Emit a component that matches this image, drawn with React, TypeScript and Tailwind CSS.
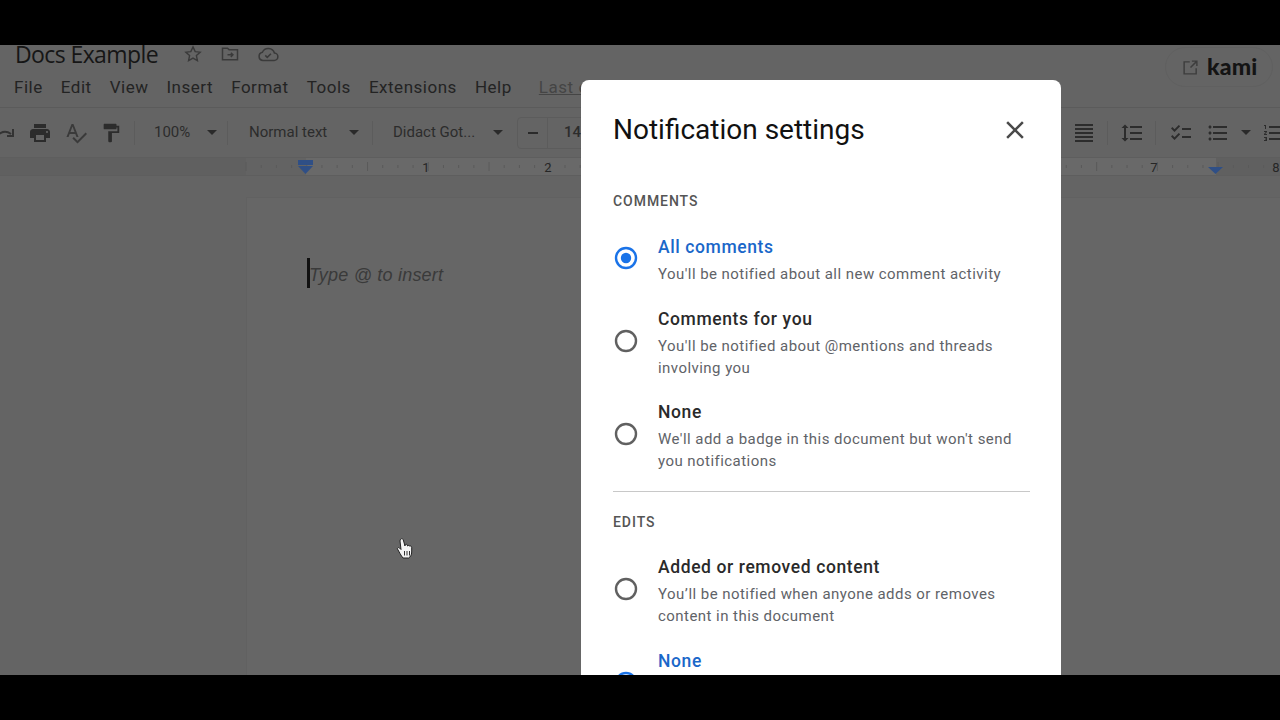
import React from "react";

const M = ({ d, size = 24, className = "" }: { d: string; size?: number; className?: string }) => (
  <svg width={size} height={size} viewBox="0 0 24 24" fill="currentColor" className={"shrink-0 " + className}><path d={d} /></svg>
);
const Caret = ({ className = "" }: { className?: string }) => (
  <svg width="10" height="5" viewBox="0 0 10 5" className={"shrink-0 " + className}><path d="M0 0h10L5 5z" fill="#2a2a2a" /></svg>
);
const Sep = ({ className = "" }: { className?: string }) => <div className={"w-px h-6 bg-[#5c5c5c] shrink-0 " + className} />;

const Radio = ({ on }: { on?: boolean }) => (
  <svg width="24" height="24" viewBox="0 0 24 24" className="shrink-0 -mt-[4px] ml-[0.5px]">
    <circle cx="12" cy="12" r="10" fill="none" stroke={on ? "#1a73e8" : "#606060"} strokeWidth="2.4" />
    {on && <circle cx="12" cy="12" r="5.2" fill="#1a73e8" />}
  </svg>
);

const Row = ({ title, lines, on, className = "" }: { title: string; lines: string[]; on?: boolean; className?: string }) => (
  <div className={"flex items-center gap-[20.5px] " + className}>
    <Radio on={on} />
    <div className="self-start">
      <div className={"text-[17.5px] leading-6 font-medium tracking-[0.6px] " + (on ? "text-[#1a67c9]" : "text-[#2a2a2a]")}>{title}</div>
      {lines.length > 0 && (
        <div className="mt-[3.5px] text-[15px] leading-[22px] tracking-[0.45px] text-[#5f6368] whitespace-pre-line">
          {lines.join("\n")}
        </div>
      )}
    </div>
  </div>
);

const ticks = Array.from({ length: 68 }, (_, i) => 246 + i * 15.19);

export default function App() {
  return (
    <div className="w-[1280px] h-[720px] bg-black py-[45px] font-['Roboto',sans-serif]">
      <div className="relative w-full h-[630px] overflow-hidden bg-[#646464] text-[#232323]">
        {/* title row */}
        <div className="h-[19px] flex items-center pl-[15px] text-[#161616]">
          <span className="text-[23px] leading-[22px] tracking-[-0.6px] font-['Open_Sans',sans-serif] -mt-[2px]">Docs Example</span>
          <svg width="20" height="20" viewBox="0 0 24 24" className="ml-[25px] -mt-[2px]" fill="none" stroke="#3a3a3a" strokeWidth="1.7"><path d="M12 3.500l2.600 5.600 6 .7-4.500 4.100 1.200 6-5.300-3-5.300 3 1.200-6-4.500-4.100 6-.7z" /></svg>
          <svg width="20" height="20" viewBox="0 0 24 24" className="ml-[17px] -mt-[2px]" fill="none" stroke="#3a3a3a" strokeWidth="1.8"><path d="M3 19V5h6l2 2h10v12z M9 13h6M13 10.500l2.500 2.500-2.500 2.500" /></svg>
          <svg width="22" height="22" viewBox="0 0 24 24" className="ml-[17px] -mt-[2px]" fill="none" stroke="#3a3a3a" strokeWidth="1.7"><path d="M6.500 19a4.500 4.500 0 0 1-.6-8.900A7 7 0 0 1 19 11a4 4 0 0 1-.5 8z M9 13.500l2.200 2.200 4-4" /></svg>
        </div>
        {/* menu row */}
        <div className="h-[44px] pt-1 flex items-center pl-[14px] gap-[18px] text-[17px] tracking-[0.52px] border-b border-[#5b5b5b] text-[#232323]">
          {["File", "Edit", "View", "Insert", "Format", "Tools", "Extensions", "Help"].map((m) => (
            <span key={m}>{m}</span>
          ))}
          <span className="ml-[9px] underline text-[#454545]">Last edit</span>
        </div>
        {/* toolbar */}
        <div className="h-[50px] flex items-center text-[15px] border-b border-[#5e5e5e] text-[#2c2c2c]">
          <svg width="16" height="12" viewBox="0 0 16 12" className="-ml-[1px] shrink-0" fill="none" stroke="#333" strokeWidth="2"><path d="M0 7c4-3 8-3 12 0M14 2v7H8" /></svg>
          <M size={24} className="ml-[13px]" d="M19 8H5c-1.66 0-3 1.34-3 3v6h4v4h12v-4h4v-6c0-1.66-1.34-3-3-3zm-3 11H8v-5h8v5zm3-7c-.55 0-1-.45-1-1s.45-1 1-1 1 .45 1 1-.45 1-1 1zm-1-9H6v4h12V3z" />
          <M size={24} className="ml-[12px] text-[#3a3a3a]" d="M12.450 16h2.090L9.430 3H7.570L2.460 16h2.090l1.120-3h5.640l1.140 3zm-6.020-5L8.500 5.480 10.570 11H6.430zm15.160.59l-8.090 8.090L9.830 16l-1.410 1.410 5.090 5.090L23 13l-1.410-1.410z" />
          <M size={22} className="ml-[12px]" d="M18 4V3c0-.55-.45-1-1-1H5c-.55 0-1 .45-1 1v4c0 .55.45 1 1 1h12c.55 0 1-.45 1-1V6h1v4H9v11c0 .55.45 1 1 1h2c.55 0 1-.45 1-1v-9h8V4h-3z" />
          <Sep className="ml-[12px]" />
          <span className="ml-[19px] w-[37px] shrink-0">100%</span>
          <Caret className="ml-[16px]" />
          <Sep className="ml-[10px]" />
          <span className="ml-[21px] w-[80px] shrink-0 whitespace-nowrap">Normal text</span>
          <Caret className="ml-[20px]" />
          <Sep className="ml-[13px]" />
          <span className="ml-[20px] w-[82px] shrink-0 whitespace-nowrap">Didact Got...</span>
          <Caret className="ml-[18px]" />
          <div className="ml-[14px] h-8 w-[90px] border border-[#5c5c5c] rounded flex items-center shrink-0">
            <div className="w-[30px] h-full border-r border-[#5c5c5c] flex items-center justify-center"><div className="w-[10px] h-[2px] bg-[#2a2a2a]" /></div>
            <span className="ml-[16px] font-medium">14</span>
          </div>
          <div className="ml-[465px] flex items-center shrink-0">
            <M size={24} d="M3 21h18v-2H3v2zm0-4h18v-2H3v2zm0-4h18v-2H3v2zm0-4h18V7H3v2zm0-6v2h18V3H3z" />
            <Sep className="ml-[11px]" />
            <M size={24} className="ml-[12px]" d="M6 7h2.500L5 3.500 1.500 7H4v10H1.500L5 20.500 8.500 17H6V7zm4-2v2h12V5H10zm0 14h12v-2H10v2zm0-6h12v-2H10v2z" />
            <Sep className="ml-[11px]" />
            <M size={24} className="ml-[13px]" d="M22 7h-9v2h9V7zm0 8h-9v2h9v-2zM5.540 11L2 7.460l1.410-1.410 2.120 2.120 4.240-4.240 1.410 1.410L5.540 11zm0 8L2 15.460l1.410-1.410 2.120 2.120 4.240-4.240 1.410 1.410L5.540 19z" />
            <M size={24} className="ml-[13px]" d="M4 10.500c-.83 0-1.500.67-1.500 1.500s.67 1.500 1.500 1.500 1.500-.67 1.500-1.500-.67-1.500-1.500-1.500zm0-6c-.83 0-1.500.67-1.500 1.500S3.170 7.500 4 7.500 5.500 6.830 5.500 6 4.830 4.500 4 4.500zm0 12c-.83 0-1.500.68-1.500 1.500s.68 1.500 1.500 1.500 1.500-.68 1.500-1.500-.67-1.500-1.500-1.500zM7 19h14v-2H7v2zm0-6h14v-2H7v2zm0-8v2h14V5H7z" />
            <Caret className="ml-[11px]" />
            <M size={24} className="ml-[11px]" d="M2 17h2v.5H3v1h1v.5H2v1h3v-4H2v1zm1-9h1V4H2v1h1v3zm-1 3h1.800L2 13.100v.9h3v-1H3.200L5 10.900V10H2v1zm5-6v2h14V5H7zm0 14h14v-2H7v2zm0-6h14v-2H7v2z" />
          </div>
        </div>
        {/* ruler */}
        <svg width="1280" height="18" viewBox="0 0 1280 18" className="block">
          <rect x="0" y="0" width="246" height="17" fill="#606060" />
          <rect x="246" y="0" width="60" height="17" fill="#636363" />
          <rect x="306" y="0" width="910" height="17" fill="#696969" />
          <rect x="1216" y="0" width="64" height="17" fill="#606060" />
          <rect x="0" y="17" width="1280" height="1" fill="#5e5e5e" />
          {ticks.map((x, i) => (
            <line key={i} x1={x} x2={x} y1={i % 4 === 0 ? 4 : 7} y2={i % 4 === 0 ? 13 : 10} stroke="#5a5a5a" strokeWidth="1" />
          ))}
          {[[426, "1"], [548, "2"], [1154, "7"], [1276, "8"]].map(([x, t]) => (
            <text key={t as string} x={x as number} y="14" textAnchor="middle" fontSize="13" fill="#262626" fontFamily="Roboto">{t}</text>
          ))}
          <rect x="298" y="2" width="15" height="5" fill="#2f4f86" />
          <path d="M298 8h15l-7.500 8z" fill="#2f4f86" />
          <path d="M1208 9h15l-7.500 7z" fill="#2f4f86" />
        </svg>
        {/* document */}
        <div className="ml-[246px] mt-[21px] w-[1034px] h-[600px] border-t border-l border-[#616161] bg-[#666666] pl-[60px] pt-[60px]">
          <div className="h-[30px] flex items-center border-l-[3px] border-[#111111]">
            <span className="mt-[4px] text-[18px] tracking-[0.2px] italic text-[#3a3a3a] font-['Liberation_Sans',sans-serif] -ml-[1px]">Type @ to insert</span>
          </div>
        </div>

        {/* kami badge */}
        <div className="absolute left-[1165px] top-[2px] w-[108px] h-[40px] rounded-[20px] border border-[#606060] flex items-center pl-[16px] gap-[8px]">
          <svg width="17" height="17" viewBox="0 0 24 24" fill="none" stroke="#3d3d3d" strokeWidth="2"><path d="M11 4H3v17h17v-8M12 12L21 3M14 3h7v7" /></svg>
          <span className="-mt-[2px] text-[23px] leading-6 font-black text-[#141414] font-['Lato',sans-serif] tracking-[0.2px]">kami</span>
        </div>

        {/* hand cursor */}
        <svg width="18" height="22" viewBox="0 0 18 22" className="absolute left-[396px] top-[492px]">
          <path d="M5 2c1-1 2 0 2.300 1L9 9V8c.5-1 2-1 2.300 0l.2 1c.5-.8 2-.8 2.200.2.8-.5 2 0 2 1V15c0 3-1.500 5-3 6H7c-1-1-2-3-3-4.500L1.500 12c-.5-1 .8-2 2-1L5 12.500 4 4c0-1 .3-1.500 1-2z" fill="#f4f4f4" stroke="#222" strokeWidth="1" />
          <path d="M8.500 14v4.500M11 14v4.500M13.500 14v4.500" stroke="#333" strokeWidth="1" />
        </svg>

        {/* modal */}
        <div className="absolute left-[581px] top-[35px] w-[480px] h-[700px] bg-white rounded-lg pl-[32px] pr-[31px]">
          <div className="h-[100px] flex items-center justify-between">
            <h1 className="text-[28px] leading-8 font-normal text-[#111111] -mt-[1px]">Notification settings</h1>
            <svg width="30" height="30" viewBox="0 0 24 24" fill="#4a4a4a"><path d="M19 6.410L17.590 5 12 10.590 6.410 5 5 6.410 10.590 12 5 17.590 6.410 19 12 13.410 17.590 19 19 17.590 13.410 12z" /></svg>
          </div>
          <div className="h-[20px] mb-[24px] mt-[11px] text-[14px] leading-5 font-medium tracking-[0.95px] text-[#555555]">COMMENTS</div>
          <Row on title="All comments" lines={["You'll be notified about all new comment activity"]} />
          <Row className="mt-[22.5px]" title="Comments for you" lines={["You'll be notified about @mentions and threads", "involving you"]} />
          <Row className="mt-[21.5px]" title="None" lines={["We'll add a badge in this document but won't send", "you notifications"]} />
          <div className="mt-[19.5px] h-px bg-[#c8c8c8]" />
          <div className="mt-[20px] h-[20px] mb-[23px] text-[14px] leading-5 font-medium tracking-[0.95px] text-[#555555]">EDITS</div>
          <Row title="Added or removed content" lines={["You’ll be notified when anyone adds or removes", "content in this document"]} />
          <Row on className="mt-[22.5px] h-[71px]" title="None" lines={[]} />
        </div>
      </div>
    </div>
  );
}
